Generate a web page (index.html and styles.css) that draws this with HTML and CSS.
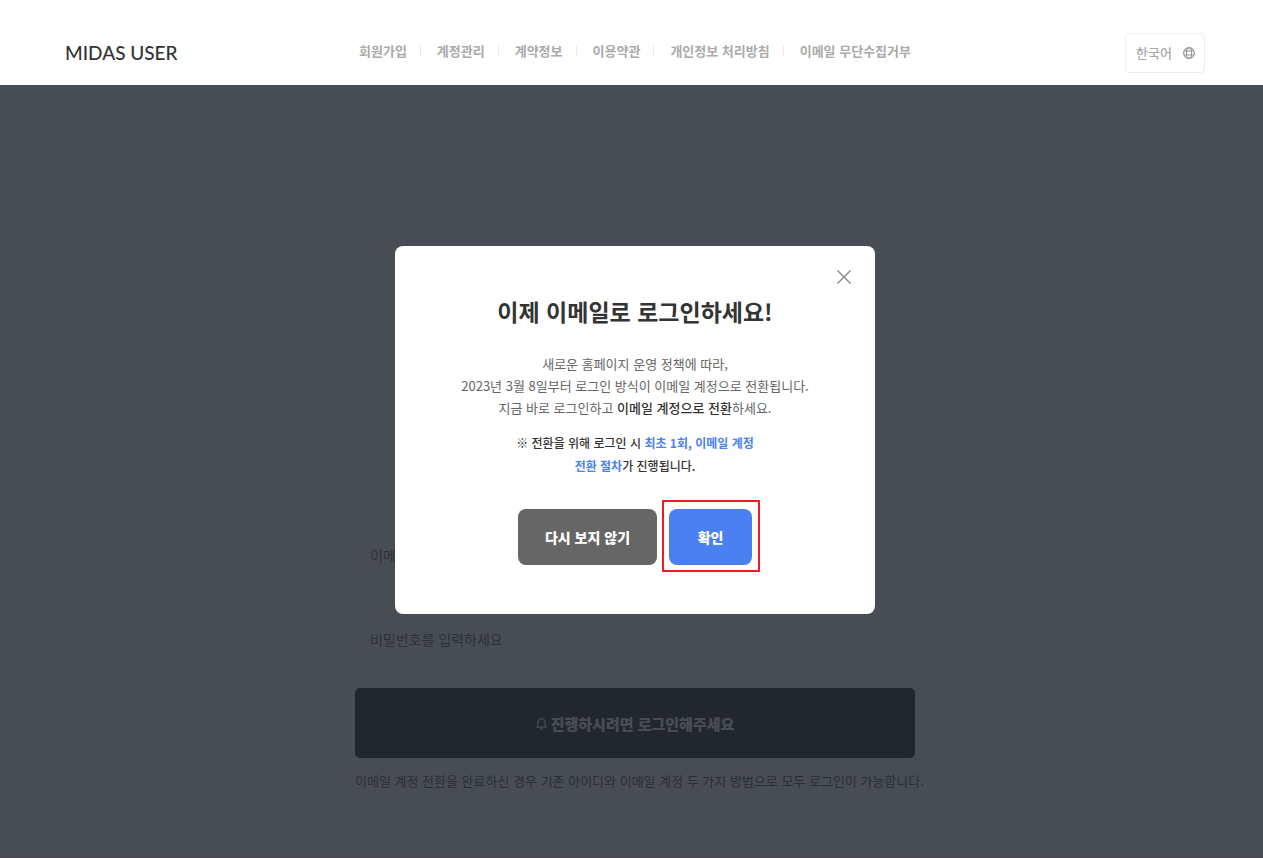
FILE: index.html
```html
<!DOCTYPE html>
<html lang="ko">
<head>
  <meta charset="UTF-8" />
  <meta name="viewport" content="width=device-width, initial-scale=1.0"/>
  <title>MIDAS USER</title>
  <link rel="stylesheet" href="styles.css">
</head>
<body>

  <header class="header">
    <a href="#" class="logo">MIDAS USER</a>
    <nav class="menu">
      <a href="#">회원가입</a>
      <a href="#">계정관리</a>
      <a href="#">계약정보</a>
      <a href="#">이용약관</a>
      <a href="#">개인정보 처리방침</a>
      <a href="#">이메일 무단수집거부</a>
    </nav>
    <button type="button" class="lang">
      한국어
      <svg width="12" height="12" viewBox="0 0 12 12" fill="none" stroke="currentColor" stroke-width="1.2" aria-hidden="true">
        <circle cx="6" cy="6" r="5.4"/>
        <ellipse cx="6" cy="6" rx="2.6" ry="5.4"/>
        <path d="M1 4h10M1 8h10"/>
      </svg>
    </button>
  </header>

  <!-- Login form -->
  <main class="login">
    <div class="login-top"></div>
    <form class="login-form">
      <input type="email" aria-label="이메일" placeholder="이메일을 입력하세요" />
      <input type="password" aria-label="비밀번호" placeholder="비밀번호를 입력하세요" />
      <button type="submit" class="login-btn">
        <svg width="11" height="13" viewBox="0 0 12 14" fill="none" stroke="currentColor" stroke-width="1.4" aria-hidden="true">
          <path d="M6 .5v1.2M.5 11h11M2 11V6a4 4 0 0 1 8 0v5M4.6 13h2.8"/>
        </svg>
        진행하시려면 로그인해주세요
      </button>
      <p class="login-info">이메일 계정 전환을 완료하신 경우 기존 아이디와 이메일 계정 두 가지 방법으로 모두 로그인이 가능합니다.</p>
    </form>
  </main>

  <!-- Notice popup -->
  <div class="overlay">
    <section class="modal" role="dialog" aria-labelledby="noticeTitle">
      <button type="button" class="close" aria-label="닫기">
        <svg width="14" height="14" viewBox="0 0 14 14" fill="none" stroke="currentColor" stroke-width="1.4">
          <path d="M.5.5l13 13M13.5.5l-13 13"/>
        </svg>
      </button>
      <h2 id="noticeTitle">이제 이메일로 로그인하세요!</h2>
      <p class="desc">
        새로운 홈페이지 운영 정책에 따라,<br>
        2023년 3월 8일부터 로그인 방식이 이메일 계정으로 전환됩니다.<br>
        지금 바로 로그인하고 <strong>이메일 계정으로 전환</strong>하세요.
      </p>
      <p class="note">
        ※ 전환을 위해 로그인 시 <em>최초 1회, 이메일 계정<br>
        전환 절차</em>가 진행됩니다.
      </p>
      <div class="buttons">
        <button type="button" class="btn">다시 보지 않기</button>
        <div class="marked">
          <button type="button" class="btn btn-blue">확인</button>
        </div>
      </div>
    </section>
  </div>

</body>
</html>
```

FILE: styles.css
```css
* {
  box-sizing: border-box;
}

body {
  margin: 0;
  min-height: 100vh;
  display: flex;
  flex-direction: column;
  overflow: hidden;
  background: #fff;
  color: #333;
  font-family: "Noto Sans CJK KR", sans-serif;
  font-size: 14px;
}

button,
input {
  font-family: inherit;
}

button {
  cursor: pointer;
}

a {
  color: inherit;
  text-decoration: none;
}

/* Header */
.header {
  position: relative;
  z-index: 2;
  display: grid;
  grid-template-columns: 1fr auto 1fr;
  align-items: center;
  height: 85px;
  padding: 20px 58px 0 65px;
  background: #fff;
}

.logo {
  font-family: Lato, sans-serif;
  font-size: 19px;
  font-weight: 500;
  line-height: 24px;
}

.menu {
  display: flex;
  padding-bottom: 3px;
  color: #aaa;
  font-size: 13px;
  font-weight: 700;
  line-height: 20px;
}

.menu a {
  display: flex;
  align-items: center;
}

.menu a + a::before {
  content: "";
  width: 1px;
  height: 10px;
  margin: 0 16px 0 13px;
  background: #e8e8e8;
}

.lang {
  display: flex;
  align-items: center;
  justify-content: space-between;
  justify-self: end;
  width: 80px;
  height: 40px;
  padding: 0 9px 0 10px;
  border: 1px solid #eee;
  border-radius: 4px;
  background: #fff;
  color: #aaa;
  font-size: 13px;
  font-weight: 500;
}

.lang svg {
  color: #999;
}

/* Login */
.login {
  flex: 1;
  padding-left: 7px;
  border-bottom: 1px solid #fdd;
}

.login-top {
  max-width: 760px;
  height: 354px;
  margin: 0 auto;
  border-bottom: 1px solid #eee;
}

.login-form {
  display: flex;
  flex-direction: column;
  gap: 14px;
  max-width: 560px;
  margin: 81px auto 0;
}

.login-form input {
  height: 70px;
  padding: 0 14px;
  border: 1px solid #eee;
  border-radius: 4px;
  font-size: 14px;
}

.login-form input::placeholder {
  color: #777;
}

.login-btn {
  display: flex;
  align-items: center;
  justify-content: center;
  gap: 4px;
  height: 70px;
  border: 0;
  border-radius: 5px;
  background: #414141;
  color: #fff;
  font-size: 15px;
  font-weight: 900;
}

.login-info {
  margin: 0;
  color: #666;
  font-size: 13px;
  line-height: 18px;
  white-space: nowrap;
}

/* Popup */
.overlay {
  position: fixed;
  inset: 0;
  z-index: 1;
  display: flex;
  align-items: center;
  justify-content: center;
  padding: 2px 0 0 7px;
  background: rgba(26, 32, 41, 0.8);
}

.modal {
  position: relative;
  width: 480px;
  padding: 47px 40px 49px;
  border-radius: 8px;
  background: #fff;
  text-align: center;
}

.close {
  position: absolute;
  top: 20px;
  right: 20px;
  display: flex;
  padding: 4px;
  border: 0;
  background: none;
  color: #888;
}

.modal h2 {
  margin: 0;
  font-size: 23px;
  font-weight: 700;
  line-height: 36px;
}

.desc {
  margin: 24px 0 0;
  color: #666;
  font-size: 13px;
  line-height: 22px;
}

.desc strong {
  color: #333;
  font-weight: 500;
}

.note {
  margin: 12px 0 0;
  font-size: 12px;
  font-weight: 500;
  line-height: 23px;
}

.note em {
  color: #4b80f0;
  font-style: normal;
  font-weight: 700;
}

.buttons {
  display: flex;
  justify-content: center;
  gap: 12px;
  margin-top: 32px;
}

.btn {
  min-width: 83px;
  height: 56px;
  padding: 0 27px;
  border: 0;
  border-radius: 8px;
  background: #666;
  color: #fff;
  font-size: 14px;
  font-weight: 900;
}

.btn-blue {
  background: #4b80f0;
}

.marked {
  position: relative;
}

.marked::after {
  content: "";
  position: absolute;
  inset: -9px -8px -7px -7px;
  border: 2px solid #ed1c24;
  pointer-events: none;
}
```
